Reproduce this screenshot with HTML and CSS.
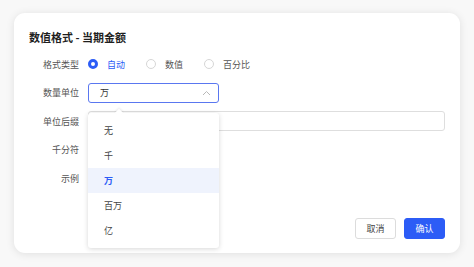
FILE: index.html
```html
<!DOCTYPE html>
<html lang="zh-CN">
<head>
<meta charset="utf-8">
<link rel="stylesheet" href="styles.css">
</head>
<body>
<div class="dialog">
  <div class="title">数值格式 - 当期金额</div>
  <div class="form">
    <div class="row">
      <div class="label">格式类型</div>
      <div class="control radios">
        <label class="radio checked"><span class="dot"></span><span class="rtext">自动</span></label>
        <label class="radio"><span class="dot"></span><span class="rtext">数值</span></label>
        <label class="radio"><span class="dot"></span><span class="rtext">百分比</span></label>
      </div>
    </div>
    <div class="row">
      <div class="label">数量单位</div>
      <div class="control">
        <div class="select">
          <span class="sel-text">万</span>
          <svg class="chev" width="9" height="6" viewBox="0 0 9 6"><path d="M1 5 L4.5 1.5 L8 5" fill="none" stroke="#b8b8b8" stroke-width="1"/></svg>
          <div class="menu">
            <span class="caret"></span>
            <div class="item">无</div>
            <div class="item">千</div>
            <div class="item active">万</div>
            <div class="item">百万</div>
            <div class="item">亿</div>
          </div>
        </div>
      </div>
    </div>
    <div class="row">
      <div class="label">单位后缀</div>
      <div class="control"><div class="input"></div></div>
    </div>
    <div class="row">
      <div class="label">千分符</div>
      <div class="control"></div>
    </div>
    <div class="row">
      <div class="label">示例</div>
      <div class="control"></div>
    </div>
  </div>
  <div class="footer">
    <button class="btn">取消</button>
    <button class="btn primary">确认</button>
  </div>
</div>
</body>
</html>
```
FILE: styles.css
```css
* { box-sizing: border-box; }
html, body { margin: 0; padding: 0; }
body {
  width: 474px;
  height: 267px;
  background: #f8f8f8;
  font-family: "Noto Sans CJK SC", "Noto Sans", sans-serif;
  padding: 13px 14px 0 14px;
  overflow: hidden;
}
.dialog {
  width: 446px;
  height: 240px;
  background: #fff;
  border-radius: 11px;
  box-shadow: 0 1px 8px rgba(0,0,0,0.10);
  padding: 17px 15px 14px 15px;
  display: flex;
  flex-direction: column;
}
.title {
  font-size: 11px;
  font-weight: 700;
  color: #1f1f1f;
  line-height: 14px;
  height: 14px;
}
.form {
  margin-top: 10px;
  display: flex;
  flex-direction: column;
  gap: 8.5px;
}
.row {
  display: flex;
  align-items: center;
  height: 20px;
}
.label {
  width: 50px;
  text-align: right;
  font-size: 9px;
  color: #555;
  margin-right: 9px;
  flex: none;
}
.control {
  flex: 1;
  display: flex;
  align-items: center;
  height: 20px;
}
.radios { gap: 0; }
.radio {
  display: flex;
  align-items: center;
  width: 58px;
  font-size: 9px;
  color: #555;
}
.radio .dot {
  width: 10px;
  height: 10px;
  border-radius: 50%;
  border: 1px solid #d6d6d6;
  margin-right: 9px;
  flex: none;
}
.radio.checked .dot {
  border: 3px solid #2c5cf6;
  background: #fff;
}
.radio.checked .rtext { color: #2c5cf6; }
.select {
  position: relative;
  width: 131px;
  height: 20px;
  border: 1px solid #5a77f0;
  border-radius: 3px;
  display: flex;
  align-items: center;
  justify-content: space-between;
  padding: 0 7px 0 11px;
  font-size: 9px;
  color: #333;
}
.chev { display: block; }
.menu {
  position: absolute;
  z-index: 2;
  left: -1px;
  top: 29px;
  width: 131px;
  background: #fff;
  border-radius: 3px;
  box-shadow: 0 1px 5px rgba(0,0,0,0.16);
  padding: 5px 0;
}
.caret {
  position: absolute;
  top: -3px;
  left: 28px;
  width: 6px;
  height: 6px;
  background: #fff;
  transform: rotate(45deg);
  box-shadow: -1px -1px 2px rgba(0,0,0,0.07);
}
.item {
  position: relative;
  height: 25px;
  line-height: 25px;
  padding-left: 16px;
  font-size: 9px;
  color: #444;
}
.item.active {
  background: #eff3fd;
  color: #2c5cf6;
  font-weight: 700;
}
.input {
  width: 357px;
  height: 20px;
  border: 1px solid #dedede;
  border-radius: 3px;
}
.footer {
  margin-top: auto;
  display: flex;
  justify-content: flex-end;
  gap: 8px;
}
.btn {
  width: 41px;
  height: 21px;
  border: 1px solid #dcdcdc;
  border-radius: 3px;
  background: #fff;
  font-family: inherit;
  font-size: 9px;
  color: #444;
  padding: 0;
}
.btn.primary {
  background: #2c5cf6;
  border-color: #2c5cf6;
  color: #fff;
}
```
